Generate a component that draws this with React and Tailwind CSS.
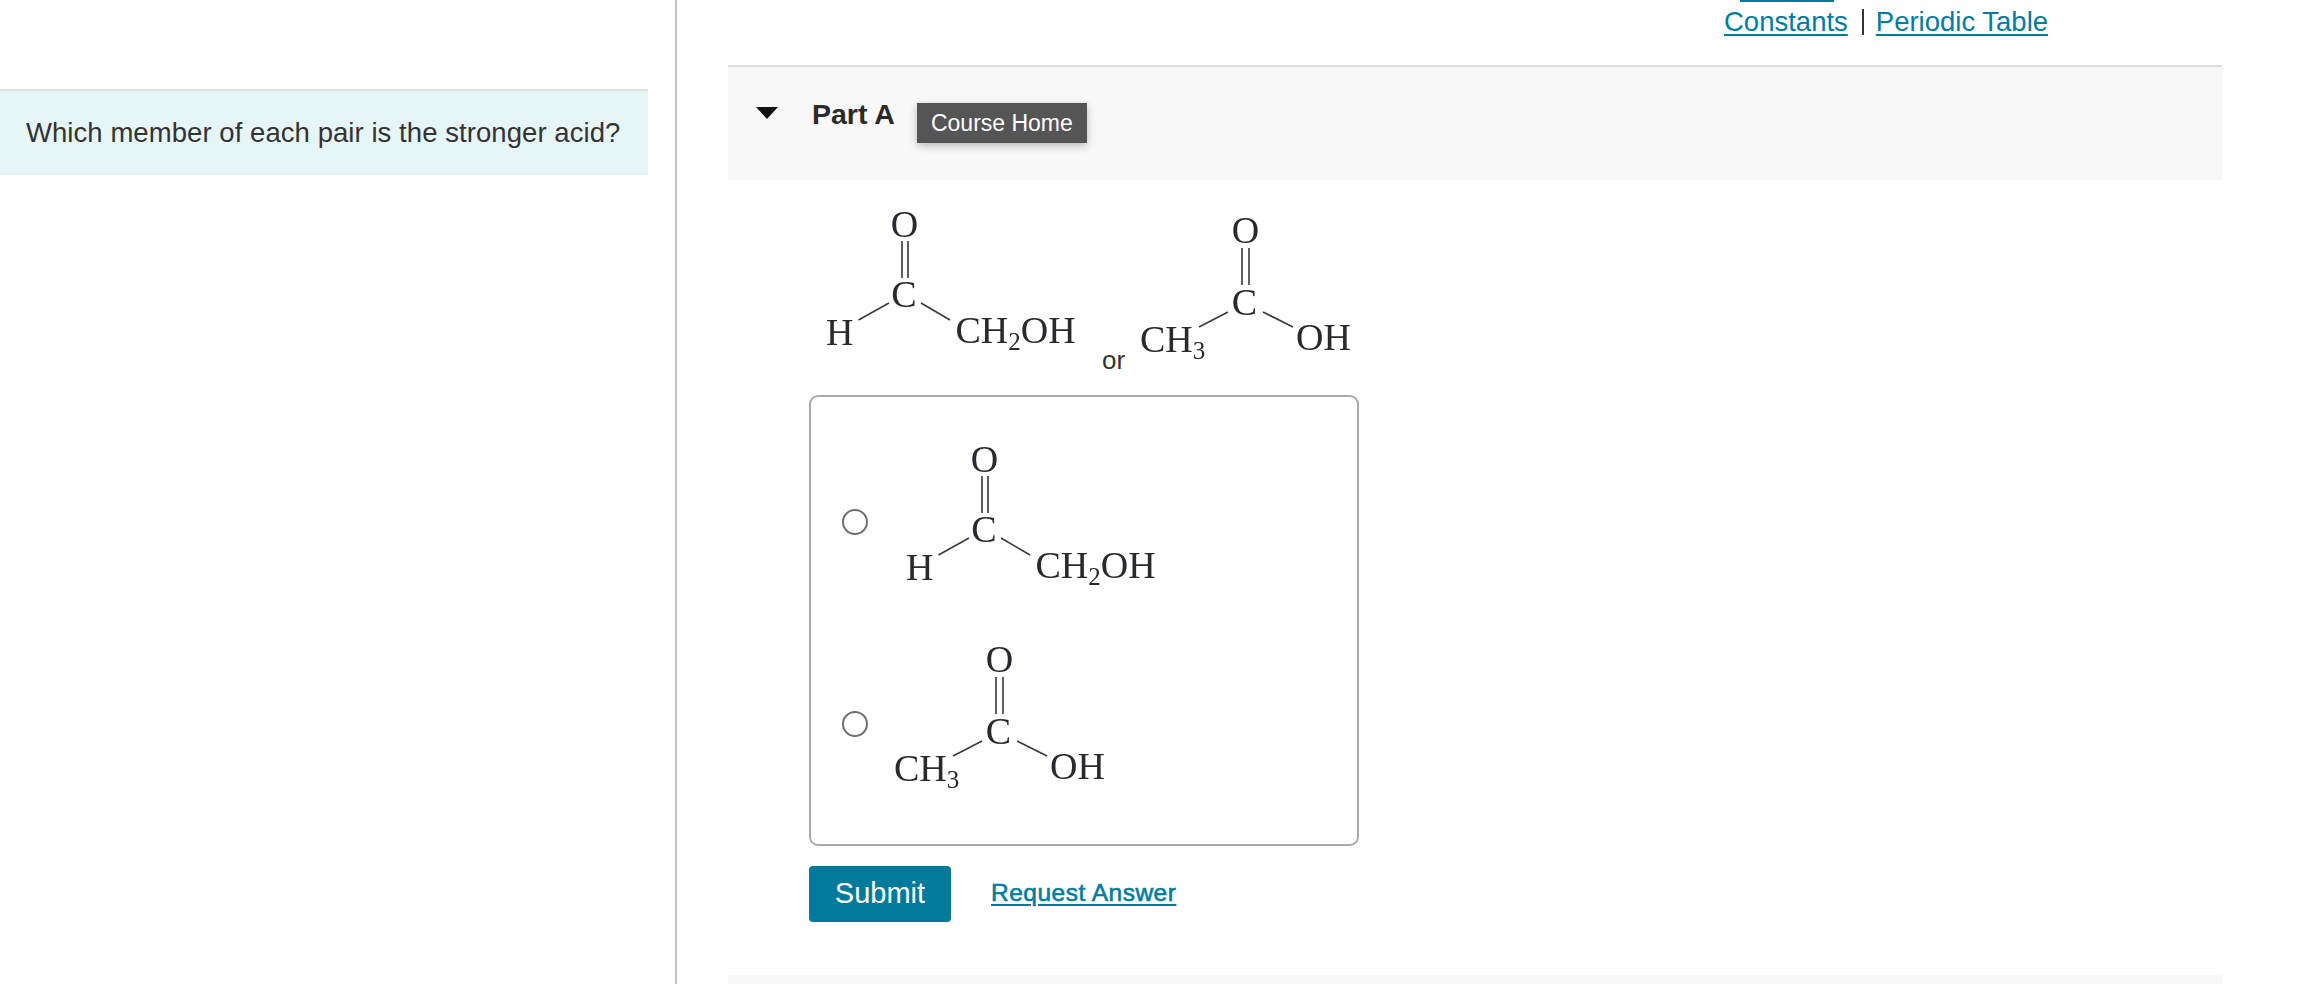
const serif = "font-['Liberation_Serif',serif]";

const Aldehyde = () => (
  <svg width="270" height="160" viewBox="0 0 270 160" className={`block shrink-0 blur-[0.4px] ${serif}`}>
    <g fill="#2a2a2e" fontSize="38">
      <text x="89.5" y="37" textAnchor="middle">O</text>
      <text x="89" y="107" textAnchor="middle">C</text>
      <text x="11" y="145">H</text>
      <text x="140.5" y="143">CH<tspan fontSize="25" dy="7">2</tspan><tspan dy="-7">OH</tspan></text>
    </g>
    <g stroke="#3a3a3e" strokeWidth="1.6" fill="none">
      <path d="M87 41V78M93 41V78" />
      <path d="M43.5 120L74 103M106 103L135 120" />
    </g>
  </svg>
);

const AceticAcid = () => (
  <svg width="230" height="165" viewBox="0 0 230 165" className={`block shrink-0 blur-[0.4px] ${serif}`}>
    <g fill="#2a2a2e" fontSize="38">
      <text x="110.5" y="38" textAnchor="middle">O</text>
      <text x="109.5" y="110" textAnchor="middle">C</text>
      <text x="5" y="147">CH<tspan fontSize="25" dy="7">3</tspan></text>
      <text x="161" y="145">OH</text>
    </g>
    <g stroke="#3a3a3e" strokeWidth="1.6" fill="none">
      <path d="M107 43V80M114 43V80" />
      <path d="M64 122L93 107M128 107L158 122" />
    </g>
  </svg>
);

const Radio = ({ className }) => (
  <span className={`block w-[26px] h-[26px] shrink-0 rounded-full border-2 border-[#707070] bg-white ${className}`} />
);

export default function App() {
  return (
    <div className="flex w-full h-[984px] overflow-hidden bg-white text-[#333] font-['Liberation_Sans',sans-serif]">
      {/* question column */}
      <div className="w-[677px] shrink-0 pt-[89px] pr-[27px] border-r-2 border-[#b8c8da]">
        <div className="h-[86px] border-t-2 border-[#dedede] bg-[#e6f5f5] pl-[26px] flex items-center">
          <p className="text-[27.5px] tracking-[0.06px]">Which member of each pair is the stronger acid?</p>
        </div>
      </div>

      <div className="w-[1494px] ml-[51px]">
        {/* top links */}
        <div className="h-[65px] pl-[996px]">
          <div className="ml-[16px] w-[94px] h-[2px] bg-[#007c9f]" />
          <div className="flex items-center h-[40px] text-[27.5px] text-[#007c9f]">
            <a className="underline underline-offset-[3px]">Constants</a>
            <span className="ml-[14px] mr-[12px] w-[2px] h-[26px] bg-[#333]" />
            <a className="underline underline-offset-[3px]">Periodic Table</a>
          </div>
        </div>

        {/* part header */}
        <div className="h-[115px] border-t-2 border-[#dedede] bg-[#f8f8f8] flex items-start">
          <span className="mt-[40px] ml-[28px] w-0 h-0 border-x-[11px] border-x-transparent border-t-[12px] border-t-[#111]" />
          <h2 className="mt-[29px] ml-[34px] text-[28.5px] font-semibold leading-[36px] text-[#2a2a2a]">Part A</h2>
          <span className="mt-[36px] ml-[22px] w-[170px] h-[40px] flex items-center justify-center bg-[#555] text-white text-[23px] shadow-[0_3px_8px_rgba(0,0,0,0.25)]">Course Home</span>
        </div>

        <div className="pl-[81px]">
          {/* structures in the question */}
          <div className="h-[215px] pt-[20px] pl-[6px] flex items-start">
            <Aldehyde />
            <span className="mt-[145px] ml-[17px] text-[26px] leading-[30px] w-[33px]">or</span>
            <div className="mt-[5px]"><AceticAcid /></div>
          </div>

          {/* answer choices */}
          <div className="w-[550px] h-[451px] border-2 border-[#aaa] rounded-[9px] pt-[38px] pl-[31px]">
            <div className="flex items-start h-[199px]">
              <Radio className="mt-[74px]" />
              <div className="ml-[27px]"><Aldehyde /></div>
            </div>
            <div className="flex items-start">
              <Radio className="mt-[77px]" />
              <div className="ml-[21px]"><AceticAcid /></div>
            </div>
          </div>

          {/* actions */}
          <div className="mt-[20px] flex items-center h-[56px]">
            <button className="w-[142px] h-[56px] bg-[#027a9c] rounded-[4px] text-white text-[29px]">Submit</button>
            <a className="ml-[40px] -mt-[2px] text-[24.5px] tracking-[0.5px] [-webkit-text-stroke:0.6px] text-[#007c9f] underline underline-offset-[3px]">Request Answer</a>
          </div>
        </div>

        {/* next part strip */}
        <div className="mt-[53px] h-[10px] bg-[#f8f8f8]" />
      </div>
    </div>
  );
}
